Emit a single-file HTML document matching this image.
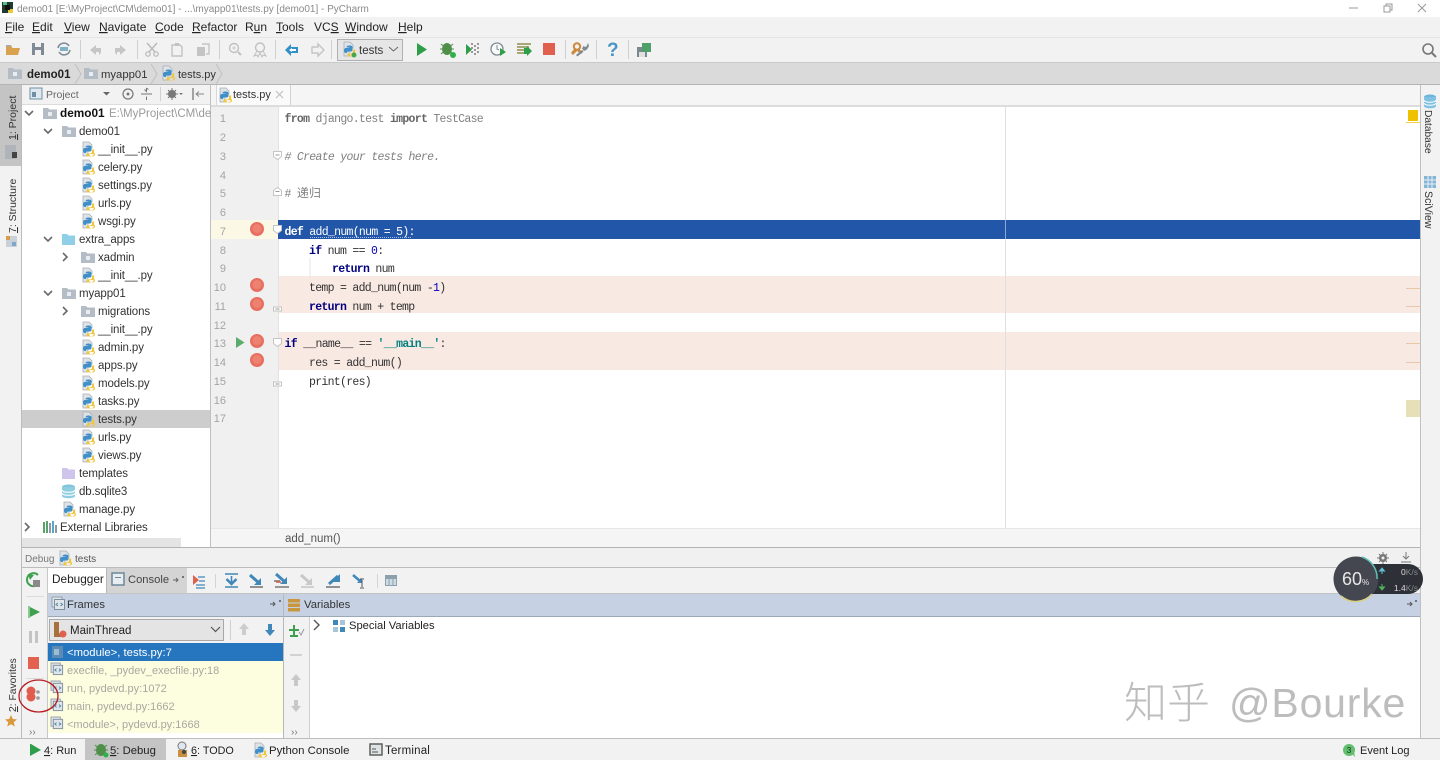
<!DOCTYPE html>
<html lang="en"><head><meta charset="utf-8"><title>PyCharm</title>
<style>
html,body{margin:0;padding:0;background:#fff;width:1440px;height:760px;overflow:hidden}
svg{display:block;position:absolute;left:0;top:0;filter:blur(.3px)}
text{font-family:"Liberation Sans","Noto Sans CJK SC",sans-serif;font-size:12px;fill:#2b2b2b}
.m{font-size:12px;fill:#222}
.t{font-size:11.500px;letter-spacing:-.1px;fill:#333}
.c{font-family:"Liberation Mono","Noto Sans CJK SC",monospace;font-size:11.500px;letter-spacing:-.7px;fill:#333}
.n{font-size:11px;fill:#a3a3a3;text-anchor:end}
.k{font-weight:bold;fill:#000080}
.g{fill:#808080}
.f{font-size:11px;fill:#a8a8a0}
.u{text-decoration:underline}
</style></head><body>
<svg width="1440" height="760" viewBox="0 0 1440 760" xmlns="http://www.w3.org/2000/svg">
<defs>
<symbol id="py" viewBox="0 0 16 16" overflow="visible">
<path d="M3 1h6l3 3v3H8v8H3z" fill="#dfe3e8" stroke="#a8afb8" stroke-width=".8"/>
<path d="M5.500 6.500c0-1.500 1-2 3-2s3 .5 3 2v2.500c0 1-.7 1.500-1.500 1.500h-3c-.8 0-1 .5-1 1.200V12H5c-1.300 0-2-1-2-2.500S3.700 7 5 7h3.500v-.5z" fill="#3f8fc8"/>
<path d="M13.500 8c1 .1 1.500 1 1.500 2.500S14.300 13 13 13H9.500v.8c0 1 1 1.700 2.500 1.700s3-.7 3-2V11c0-1.500-.5-2.700-1.500-3zM6.500 12.500h3c1.500 0 2.500-.8 2.500-2V8.500h2V12c0 2-1.500 3.500-3.500 3.500h-2c-1.200 0-2-.8-2-2z" fill="#f2c63c"/>
</symbol>
<symbol id="fo" viewBox="0 0 14 12" overflow="visible"><path d="M0 1h5l1.500 1.500H14V12H0z" fill="#b4bcc6"/><rect x="5" y="5" width="4" height="4" fill="#e9edf1"/></symbol>
<symbol id="fr" viewBox="0 0 14 14" overflow="visible"><rect x="0" y="0" width="10" height="10" fill="#dfe5ea" stroke="#93a0aa"/><rect x="2.500" y="2.500" width="10" height="10" fill="#dfe5ea" stroke="#7f8f9c"/><path d="M6 6l-2 1.500L6 9M8.500 6l2 1.500-2 1.500" stroke="#4d87a8" fill="none"/></symbol>
<symbol id="bp" viewBox="0 0 14 14"><circle cx="7" cy="7" r="7" fill="#e86f60"/><circle cx="7" cy="6.500" r="4.500" fill="#ed8273"/></symbol>
</defs>

<!-- base panels -->
<rect width="1440" height="760" fill="#f2f2f2"/>
<rect width="1440" height="17" fill="#fff"/>
<rect y="37" width="1440" height="1" fill="#e4e4e4"/>
<rect y="62" width="1440" height="1" fill="#c9c9c9"/>
<rect y="63" width="1440" height="21" fill="#dadada"/>
<rect y="84" width="1440" height="1" fill="#b4b4b4"/>

<!-- title -->
<rect x="2" y="2" width="11" height="11" fill="#1d3a30"/><rect x="3" y="2" width="4" height="3" fill="#4fc08d"/><rect x="8" y="9" width="5" height="4" fill="#e8c83c"/><rect x="5" y="5" width="5" height="5" fill="#111"/>
<text x="17" y="12" style="font-size:10px;fill:#8a8a8a">demo01 [E:\MyProject\CM\demo01] - ...\myapp01\tests.py [demo01] - PyCharm</text>
<path d="M1349 8h9" stroke="#999" stroke-width="1"/>
<path d="M1384 6h6v6h-6zM1386 6V4h6v6h-2" stroke="#999" fill="none"/>
<path d="M1418 4l8 8M1426 4l-8 8" stroke="#999" fill="none"/>

<!-- menu -->
<text class="m" x="5" y="31"><tspan class="u">F</tspan>ile</text>
<text class="m" x="32" y="31"><tspan class="u">E</tspan>dit</text>
<text class="m" x="64" y="31"><tspan class="u">V</tspan>iew</text>
<text class="m" x="99" y="31"><tspan class="u">N</tspan>avigate</text>
<text class="m" x="155" y="31"><tspan class="u">C</tspan>ode</text>
<text class="m" x="192" y="31"><tspan class="u">R</tspan>efactor</text>
<text class="m" x="245" y="31">R<tspan class="u">u</tspan>n</text>
<text class="m" x="276" y="31"><tspan class="u">T</tspan>ools</text>
<text class="m" x="314" y="31">VC<tspan class="u">S</tspan></text>
<text class="m" x="345" y="31"><tspan class="u">W</tspan>indow</text>
<text class="m" x="398" y="31"><tspan class="u">H</tspan>elp</text>

<!-- toolbar -->
<g fill="none">
<path d="M6 46h5l1.500 2H20l-2 7H6z" fill="#d9a24e"/><path d="M6 45h5l1 1.500H6z" fill="#a9a9a9"/>
<path d="M32 43h12v12H32z" fill="#7f8a95"/><rect x="35" y="43" width="6" height="4" fill="#f2f2f2"/><rect x="35" y="50" width="6" height="5" fill="#f2f2f2"/>
<path d="M58 48a6 6 0 0 1 11-2M70 50a6 6 0 0 1-11 2" stroke="#7b8a93" stroke-width="1.600"/><rect x="60" y="47" width="8" height="4" fill="#7fb1c9"/>
<path d="M90 50l6-5v3h5v5l-2 2v-3h-3v3z" fill="#c6c6c6"/>
<path d="M126 50l-6-5v3h-5v5l2 2v-3h3v3z" fill="#c6c6c6"/>
<path d="M147 43l8 9M157 43l-8 9" stroke="#b8b8b8" stroke-width="1.400"/><circle cx="148" cy="54" r="2.200" stroke="#b8b8b8" stroke-width="1.200"/><circle cx="156" cy="54" r="2.200" stroke="#b8b8b8" stroke-width="1.200"/>
<path d="M172 45h8l2 2v9h-10z" stroke="#c2c2c2" stroke-width="1.400"/><rect x="175" y="43" width="4" height="3" fill="#c2c2c2"/>
<rect x="197" y="47" width="8" height="9" fill="#c4c4c4"/><path d="M202 44h7v10h-3" stroke="#c4c4c4" stroke-width="1.400"/>
<circle cx="234" cy="48" r="4.500" stroke="#c0c0c0" stroke-width="1.400"/><path d="M238 52l3 3" stroke="#c0c0c0" stroke-width="2"/><circle cx="234" cy="48" r="1.500" fill="#d0d0d0"/>
<circle cx="260" cy="47.500" r="4.500" stroke="#c0c0c0" stroke-width="1.400"/><path d="M257 51l-3 5 3-1 1 2 2-4 2 4 1-2 3 1-3-5" stroke="#c0c0c0"/>
<path d="M285 50l6-6v3h7v6h-7v3z" fill="#2e8fc9"/><path d="M289 50l3-2v1h4v2h-4v1z" fill="#fff"/>
<path d="M324 50l-6-6v3h-6v6h6v3z" stroke="#c4c4c4" stroke-width="1.400"/>
</g>
<g fill="#d0d0d0"><rect x="80" y="40" width="1" height="19"/><rect x="137" y="40" width="1" height="19"/><rect x="219" y="40" width="1" height="19"/><rect x="275" y="40" width="1" height="19"/><rect x="565" y="40" width="1" height="19"/><rect x="596" y="40" width="1" height="19"/><rect x="628" y="40" width="1" height="19"/><rect x="331" y="40" width="1" height="19"/></g>
<rect x="337.500" y="39.500" width="65" height="21" fill="#e6e6e6" stroke="#b0b0b0"/>
<use href="#py" x="341" y="41" width="16" height="16"/>
<circle cx="354" cy="55" r="2.500" fill="#46a84a"/>
<text x="359" y="54" style="font-size:11.500px;fill:#333">tests</text>
<path d="M389 47l4.500 4 4.500-4" fill="none" stroke="#666"/>
<path d="M417 43l10 6.500-10 6.500z" fill="#2f9e4a"/>
<ellipse cx="447" cy="49" rx="5" ry="6" fill="#4f8f4a"/><path d="M441 44l12 10M453 44l-12 10M440 49h14" stroke="#4f8f4a"/><circle cx="453" cy="55" r="3" fill="#30b04a"/>
<path d="M466 44v11l6-5.500z" fill="#2f9e4a"/><g fill="#999"><rect x="471" y="43" width="2" height="2"/><rect x="474" y="45" width="2" height="2"/><rect x="477" y="43" width="2" height="2"/><rect x="471" y="47" width="2" height="2"/><rect x="474" y="49" width="2" height="2"/><rect x="477" y="47" width="2" height="2"/><rect x="477" y="51" width="2" height="2"/><rect x="471" y="51" width="2" height="2"/><rect x="474" y="53" width="2" height="2"/></g>
<circle cx="497" cy="49" r="6" fill="#fafafa" stroke="#7b8a93" stroke-width="1.300"/><path d="M497 45v4l2 1" stroke="#7b8a93" fill="none"/><path d="M500 48l6 4-6 4z" fill="#2f9e4a"/>
<path d="M517 44h14M517 47h12M517 50h8M517 53h8" stroke="#8c8f4f" stroke-width="1.500"/><path d="M524 48h3v-2l5 5-5 5v-2h-3z" fill="#2f9e4a"/>
<rect x="543" y="43" width="12" height="12" fill="#e05f4f"/>
<circle cx="577" cy="46.500" r="3.200" fill="none" stroke="#cc8a3c" stroke-width="2"/>
<path d="M579 49l4 3-2 2-4-3zM574 49l-3 4 2 2 4-4z" fill="#cc8a3c"/>
<path d="M588 43l-1.500 3.500-2 .5-.5-1.500-2 3 2 2.500 3-1.500 2-3.500z" fill="#7f8a90"/><path d="M582 50l-6 5 1.500 1.500 6-5z" fill="#7f8a90"/>
<text x="607" y="56" style="font-size:19px;font-weight:bold;fill:#4a94c8">?</text>
<rect x="637" y="47" width="10" height="10" fill="#7a8890"/><rect x="639" y="52" width="6" height="5" fill="#e0e0e0"/><rect x="642" y="43" width="9" height="9" fill="#4f9f6a"/>
<circle cx="1428" cy="49" r="5" fill="none" stroke="#777" stroke-width="1.600"/><path d="M1432 53l4 4" stroke="#777" stroke-width="2"/>

<!-- nav bar -->
<use href="#fo" x="8" y="67" width="14" height="12"/>
<text x="27" y="78" style="font-size:11.500px;font-weight:bold;fill:#222">demo01</text>
<path d="M75 64l6 10-6 10" fill="none" stroke="#c0c0c0"/>
<use href="#fo" x="84" y="67" width="14" height="12"/>
<text x="101" y="78" style="font-size:11.300px;fill:#333">myapp01</text>
<path d="M151 64l6 10-6 10" fill="none" stroke="#c0c0c0"/>
<use href="#py" x="160" y="65" width="16" height="16"/>
<text x="178" y="78" style="font-size:11px;fill:#333">tests.py</text>
<path d="M216 64l6 10-6 10" fill="none" stroke="#c0c0c0"/>

<!-- left strip -->
<rect x="0" y="85" width="21" height="81" fill="#c4c4c4"/>
<rect x="21" y="85" width="1" height="654" fill="#bcbcbc"/>
<text transform="translate(16 140) rotate(-90)" style="font-size:10.500px;fill:#333"><tspan class="u">1</tspan>: Project</text>
<rect x="5" y="145" width="11" height="14" fill="#aeb4ba"/><rect x="12" y="152" width="5" height="6" fill="#444"/>
<text transform="translate(16 233) rotate(-90)" style="font-size:10.500px;fill:#333"><tspan class="u">7</tspan>: Structure</text>
<rect x="6" y="236" width="11" height="11" fill="#c8d0d8"/><rect x="6" y="236" width="4" height="4" fill="#d89c4c"/><rect x="12" y="242" width="4" height="4" fill="#7fa6c8"/>
<text transform="translate(16 712) rotate(-90)" style="font-size:10.300px;fill:#333"><tspan class="u">2</tspan>: Favorites</text>
<path d="M11 715l1.800 4 4.200.4-3.200 2.800 1 4.300-3.800-2.300-3.800 2.300 1-4.300L5 719.400l4.200-.4z" fill="#d89a3c"/>

<!-- project header -->
<rect x="22" y="85" width="188" height="19" fill="#f2f2f2"/>
<rect x="22" y="104" width="188" height="1" fill="#dcdcdc"/>
<rect x="30" y="88" width="12" height="11" fill="#dfe8ee" stroke="#6f8fa6"/><rect x="32" y="92" width="4" height="5" fill="#6f8fa6"/>
<text x="46" y="98" style="font-size:10.500px;fill:#666">Project</text>
<path d="M103 92l3.500 3.500 3.500-3.500z" fill="#666"/>
<circle cx="128" cy="94" r="5" fill="none" stroke="#777" stroke-width="1.200"/><circle cx="128" cy="94" r="1.500" fill="#777"/>
<path d="M141 94h11M146.500 88v3.500l-2-2M146.500 88l2 1.500M146.500 100v-3.500" stroke="#777" fill="none"/>
<rect x="160" y="87" width="1" height="14" fill="#d0d0d0"/>
<circle cx="172" cy="94" r="4" fill="#777"/><circle cx="172" cy="94" r="1.500" fill="#f2f2f2"/><path d="M172 88v12M166 94h12M168 90l8 8M176 90l-8 8" stroke="#777"/><path d="M179 93l2 2 2-2z" fill="#777"/>
<path d="M193 88v12" stroke="#777" stroke-width="1.300"/><path d="M197 94h7M199 91.500L196 94l3 2.500" stroke="#888" fill="none"/>

<!-- tree -->
<rect x="22" y="105" width="188" height="442" fill="#fff"/>
<rect x="22" y="410" width="188" height="18" fill="#cdcdcd"/>
<rect x="22" y="538" width="159" height="9" fill="#e4e4e4"/>
<rect x="210" y="85" width="1" height="463" fill="#c0c0c0"/>
<g fill="none" stroke="#6a6a6a" stroke-width="1.600">
<path d="M25 111l4 4 4-4M44 129l4 4 4-4M44 237l4 4 4-4M44 291l4 4 4-4"/>
<path d="M63 253l4 4-4 4M63 307l4 4-4 4M25 523l4 4-4 4"/>
</g>
<use href="#fo" x="43" y="107" width="14" height="12"/>
<text x="60" y="117" style="font-size:11.800px;font-weight:bold;fill:#111">demo01</text>
<text x="109" y="117" style="font-size:11.500px;fill:#9a9a9a">E:\MyProject\CM\de</text>
<use href="#fo" x="62" y="125" width="14" height="12"/><text class="t" x="79" y="135">demo01</text>
<use href="#py" x="80" y="141" width="16" height="16"/><text class="t" x="98" y="153">__init__.py</text>
<use href="#py" x="80" y="159" width="16" height="16"/><text class="t" x="98" y="171">celery.py</text>
<use href="#py" x="80" y="177" width="16" height="16"/><text class="t" x="98" y="189">settings.py</text>
<use href="#py" x="80" y="195" width="16" height="16"/><text class="t" x="98" y="207">urls.py</text>
<use href="#py" x="80" y="213" width="16" height="16"/><text class="t" x="98" y="225">wsgi.py</text>
<path d="M62 234h5l1.500 1.500H75V245H62z" fill="#8fd0e8"/><text class="t" x="79" y="243">extra_apps</text>
<use href="#fo" x="81" y="251" width="14" height="12"/><text class="t" x="98" y="261">xadmin</text>
<use href="#py" x="80" y="267" width="16" height="16"/><text class="t" x="98" y="279">__init__.py</text>
<use href="#fo" x="62" y="287" width="14" height="12"/><text class="t" x="79" y="297">myapp01</text>
<use href="#fo" x="81" y="305" width="14" height="12"/><text class="t" x="98" y="315">migrations</text>
<use href="#py" x="80" y="321" width="16" height="16"/><text class="t" x="98" y="333">__init__.py</text>
<use href="#py" x="80" y="339" width="16" height="16"/><text class="t" x="98" y="351">admin.py</text>
<use href="#py" x="80" y="357" width="16" height="16"/><text class="t" x="98" y="369">apps.py</text>
<use href="#py" x="80" y="375" width="16" height="16"/><text class="t" x="98" y="387">models.py</text>
<use href="#py" x="80" y="393" width="16" height="16"/><text class="t" x="98" y="405">tasks.py</text>
<use href="#py" x="80" y="411" width="16" height="16"/><text class="t" x="98" y="423">tests.py</text>
<use href="#py" x="80" y="429" width="16" height="16"/><text class="t" x="98" y="441">urls.py</text>
<use href="#py" x="80" y="447" width="16" height="16"/><text class="t" x="98" y="459">views.py</text>
<path d="M62 468h5l1.500 1.500H75V479H62z" fill="#cfc4ec"/><text class="t" x="79" y="477">templates</text>
<ellipse cx="68.500" cy="487" rx="6.500" ry="2.500" fill="#7fc4dc"/><path d="M62 487v9c0 3 13 3 13 0v-9" fill="#8fcde0"/><path d="M62 490c0 3 13 3 13 0M62 493c0 3 13 3 13 0" stroke="#fff" fill="none"/><text class="t" x="79" y="495">db.sqlite3</text>
<use href="#py" x="61" y="501" width="16" height="16"/><text class="t" x="79" y="513">manage.py</text>
<g fill="#5ba36a"><rect x="43" y="522" width="2" height="11"/><rect x="46" y="521" width="2" height="12"/></g><rect x="49" y="523" width="2" height="10" fill="#8a9aa6"/><rect x="52" y="521" width="2" height="12" fill="#5aa6c8"/><rect x="55" y="525" width="2" height="8" fill="#8a9aa6"/>
<text class="t" x="60" y="531">External Libraries</text>

<!-- editor tabs -->
<rect x="211" y="85" width="1209" height="20" fill="#f5f5f5"/>
<rect x="216" y="85" width="1" height="20" fill="#d8d8d8"/><rect x="217" y="85" width="73" height="20" fill="#fafafa"/><rect x="290" y="85" width="1" height="20" fill="#d0d0d0"/>
<use href="#py" x="217" y="87" width="16" height="16"/>
<text x="233" y="98" style="font-size:11px;fill:#333">tests.py</text>
<path d="M276 91l7 7M283 91l-7 7" stroke="#bdbdbd"/>
<rect x="211" y="105" width="1209" height="2" fill="#dcdcdc"/>

<!-- editor -->
<rect x="211" y="107" width="1209" height="422" fill="#fff"/>
<rect x="211" y="107" width="67" height="422" fill="#f0f0f0"/>
<rect x="278" y="107" width="1" height="422" fill="#e2e2e2"/>
<rect x="211" y="220" width="67" height="19" fill="#fcf8e6"/>
<rect x="278" y="220" width="1142" height="19" fill="#2156a8"/>
<rect x="279" y="276" width="1141" height="37" fill="#f9e9e3"/>
<rect x="279" y="332" width="1141" height="38" fill="#f9e9e3"/>
<rect x="1005" y="107" width="1" height="422" fill="#dfdfdf"/>
<rect x="1005" y="220" width="1" height="19" fill="#8ea8d0"/>
<g><text class="n" x="226" y="122">1</text><text class="n" x="226" y="141">2</text><text class="n" x="226" y="160">3</text><text class="n" x="226" y="179">4</text><text class="n" x="226" y="197">5</text><text class="n" x="226" y="216">6</text><text class="n" x="226" y="235">7</text><text class="n" x="226" y="254">8</text><text class="n" x="226" y="272">9</text><text class="n" x="226" y="291">10</text><text class="n" x="226" y="310">11</text><text class="n" x="226" y="329">12</text><text class="n" x="226" y="347">13</text><text class="n" x="226" y="366">14</text><text class="n" x="226" y="385">15</text><text class="n" x="226" y="404">16</text><text class="n" x="226" y="422">17</text></g>
<use href="#bp" x="250" y="222" width="14" height="14"/><use href="#bp" x="250" y="278" width="14" height="14"/><use href="#bp" x="250" y="297" width="14" height="14"/><use href="#bp" x="250" y="334" width="14" height="14"/><use href="#bp" x="250" y="353" width="14" height="14"/>
<path d="M236 337l8.500 5.500-8.500 5.500z" fill="#5cab6e"/>
<g fill="#fff" stroke="#c4c4c4"><path d="M273.500 151.500h8v5l-4 3-4-3zM273.500 195.500v-5l4-3 4 3v5zM273.500 225.500h8v5l-4 3-4-3zM273.500 307v4h8v-4zM273.500 338.500h8v5l-4 3-4-3zM273.500 382v4h8v-4z"/></g>
<path d="M275.500 155h4M275.500 191.500h4M275.500 309h4M275.500 384h4" stroke="#999"/>
<path d="M310 258v20" stroke="#e4e4e4"/>
<text class="c" x="284.500" y="122" style="fill:#666"><tspan style="font-weight:bold">from</tspan> <tspan class="g">django.test</tspan> <tspan style="font-weight:bold">import</tspan> <tspan class="g">TestCase</tspan></text>
<text class="c" x="284.500" y="160" style="font-style:italic;fill:#808080"># Create your tests here.</text>
<text class="c" x="284.500" y="197" style="fill:#808080"># <tspan style="font-size:12px;letter-spacing:0">递归</tspan></text>
<text class="c" x="284.500" y="235" style="fill:#fff"><tspan style="font-weight:bold">def</tspan> add_num(num = 5):</text>
<path d="M310 237.500h102" stroke="#a9bede" stroke-dasharray="1 1"/>
<text class="c" x="309" y="254"><tspan class="k">if</tspan> num == <tspan style="fill:#0000c0">0</tspan>:</text>
<text class="c" x="332" y="272"><tspan class="k">return</tspan> num</text>
<text class="c" x="309" y="291">temp = add_num(num -<tspan style="fill:#0000c0">1</tspan>)</text>
<text class="c" x="309" y="310"><tspan class="k">return</tspan> num + temp</text>
<text class="c" x="284.500" y="347"><tspan class="k">if</tspan> __name__ == <tspan style="fill:#008080;font-weight:bold">'__main__'</tspan>:</text>
<text class="c" x="309" y="366">res = add_num()</text>
<text class="c" x="309" y="385">print(res)</text>
<rect x="1408" y="110" width="10" height="11" fill="#eec200"/><rect x="1406" y="122" width="14" height="1" fill="#eed050"/>
<rect x="1406" y="400" width="14" height="17" fill="#e6dfb8"/>
<g fill="#e8c8a8"><rect x="1406" y="288" width="14" height="1"/><rect x="1406" y="306" width="14" height="1"/><rect x="1406" y="343" width="14" height="1"/><rect x="1406" y="362" width="14" height="1"/></g>
<rect x="1420" y="85" width="1" height="654" fill="#c0c0c0"/>

<!-- breadcrumb -->
<rect x="211" y="529" width="1209" height="18" fill="#f5f5f5"/>
<rect x="211" y="528" width="1209" height="1" fill="#e6e6e6"/>
<text x="285" y="542" style="font-size:11.500px;fill:#555">add_num()</text>

<!-- right strip -->
<ellipse cx="1430" cy="97" rx="6" ry="2.500" fill="#6cb4dc"/><path d="M1424 97v9c0 3 12 3 12 0v-9" fill="#80c0e2"/><path d="M1424 100c0 3 12 3 12 0M1424 103c0 3 12 3 12 0" stroke="#fff" fill="none"/>
<text transform="translate(1425 110) rotate(90)" style="font-size:10.200px;fill:#333">Database</text>
<rect x="1424" y="176" width="12" height="12" fill="#86b4d4"/><path d="M1428 176v12M1432 176v12M1424 180h12M1424 184h12" stroke="#e8f0f6"/>
<text transform="translate(1425 191) rotate(90)" style="font-size:10.600px;fill:#333">SciView</text>

<!-- debug header -->
<rect x="22" y="547" width="1398" height="1" fill="#b4b4b4"/>
<rect x="22" y="548" width="1398" height="19" fill="#f0f0f0"/>
<rect x="22" y="567" width="1398" height="1" fill="#bcbcbc"/>
<text x="25" y="562" style="font-size:10px;fill:#777">Debug</text>
<use href="#py" x="57" y="550" width="16" height="16"/>
<text x="75" y="562" style="font-size:10px;fill:#555">tests</text>
<circle cx="1383" cy="558" r="4" fill="#777"/><path d="M1383 552v12M1377 558h12M1379 554l8 8M1387 554l-8 8" stroke="#777"/><circle cx="1383" cy="558" r="1.500" fill="#f0f0f0"/>
<path d="M1406 552v6M1403 556l3 3 3-3M1401 562h10" stroke="#777" fill="none"/>

<!-- debug left tools -->
<rect x="22" y="568" width="25" height="171" fill="#f2f2f2"/>
<rect x="47" y="568" width="1" height="171" fill="#c8c8c8"/>
<path d="M38 575a6.500 6.500 0 1 0-3 11" fill="none" stroke="#3fa050" stroke-width="2"/><path d="M28 574l2 6 4-5z" fill="#3fa050"/><rect x="33" y="580" width="7" height="7" fill="#8a8a8a"/>
<rect x="26" y="596" width="18" height="1" fill="#dcdcdc"/>
<path d="M28 606l12 6-12 6z" fill="#3fa050"/><path d="M28 606h2v12h-2z" fill="#8ac890"/>
<rect x="29" y="631" width="3" height="12" fill="#c4c4c4"/><rect x="35" y="631" width="3" height="12" fill="#c4c4c4"/>
<rect x="28" y="657" width="11" height="12" fill="#e2614f"/>
<rect x="26" y="678" width="18" height="1" fill="#dcdcdc"/>
<circle cx="31" cy="691" r="4.500" fill="#e05c4c"/><circle cx="31" cy="697" r="4.500" fill="#e05c4c"/><circle cx="38" cy="692" r="1.800" fill="#9a9a9a"/><circle cx="38" cy="698" r="1.800" fill="#9a9a9a"/>
<text x="29" y="735" style="font-size:10px;fill:#777">››</text>

<!-- debug tabs -->
<rect x="48" y="568" width="58" height="25" fill="#fff"/>
<rect x="106" y="568" width="81" height="25" fill="#d4d4d4"/>
<rect x="106" y="568" width="1" height="25" fill="#b8b8b8"/>
<rect x="187" y="568" width="1233" height="25" fill="#f2f2f2"/>
<text x="52" y="583" style="font-size:11.800px;fill:#222">Debugger</text>
<rect x="112" y="573" width="12" height="12" fill="#e8edf1" stroke="#6d8899" stroke-width="1.500"/><rect x="115" y="577" width="6" height="1" fill="#6d8899"/>
<text x="128" y="583" style="font-size:11.200px;fill:#444">Console</text>
<path d="M173 580h5M176 578l2 2-2 2" fill="none" stroke="#666"/><circle cx="183" cy="577" r="1" fill="#555"/>
<path d="M193 575l6 5-6 5z" fill="#e0604f"/><path d="M198 577h7M199 581h6M196 585h9M196 588h9" stroke="#3f88b8" stroke-width="1.200"/>
<rect x="215" y="574" width="1" height="14" fill="#d4d4d4"/>
<g stroke-width="1.600" fill="none"><path d="M225 574h13M225 587h13M231.500 576v8" stroke="#3f88b8"/><path d="M226.500 579l5 5 5-5" stroke="#3f88b8" stroke-width="2.500"/>
<path d="M250 575l9 8" stroke="#3f88b8" stroke-width="3"/><path d="M261 578v7h-7z" fill="#3f88b8"/><path d="M250 587h13" stroke="#777"/>
<path d="M276 574l9 8" stroke="#3f88b8" stroke-width="3"/><path d="M287 577v7h-7z" fill="#3f88b8"/><path d="M275 587h14M274 581h6" stroke="#777"/><path d="M276 582h5" stroke="#d8604f"/>
<path d="M301 575l9 8" stroke="#c8c8c8" stroke-width="3"/><path d="M312 578v7h-7z" fill="#c8c8c8"/><path d="M301 587h13" stroke="#c8c8c8"/>
<path d="M329 584l9-8" stroke="#3f88b8" stroke-width="3"/><path d="M340 574v8h-8z" fill="#3f88b8"/><path d="M326 587h14" stroke="#777"/>
<path d="M353 575l7 6" stroke="#3f88b8" stroke-width="2.500"/><path d="M362 578v5h-5z" fill="#3f88b8"/><path d="M362 580v7M360 579h4M360 588h4" stroke="#555" stroke-width="1"/></g>
<rect x="377" y="574" width="1" height="14" fill="#d4d4d4"/>
<rect x="385" y="575" width="12" height="11" fill="#8ca0ae"/><rect x="386" y="579" width="10" height="6" fill="#d0dce4"/><path d="M389 579v6M393 579v6" stroke="#8ca0ae"/>
<rect x="48" y="593" width="1372" height="1" fill="#c4c4c4"/>

<!-- frames & variables headers -->
<rect x="48" y="594" width="1372" height="22" fill="#c6d2e4"/>
<rect x="48" y="616" width="1372" height="1" fill="#9aa8b8"/>
<rect x="283" y="594" width="1" height="145" fill="#b8b8b8"/>
<use href="#fr" x="52" y="597" width="14" height="14"/>
<text x="67" y="608" style="font-size:11.200px;fill:#333">Frames</text>
<path d="M270 604h5M273 602l2 2-2 2" fill="none" stroke="#555"/><circle cx="280" cy="601" r="1" fill="#555"/>
<rect x="288" y="599" width="12" height="3.500" fill="#c8963c"/><rect x="288" y="603.500" width="12" height="3.500" fill="#c8963c"/><rect x="288" y="608" width="12" height="3.500" fill="#c8963c"/>
<text x="304" y="608" style="font-size:11.300px;fill:#333">Variables</text>
<path d="M1407 604h5M1410 602l2 2-2 2" fill="none" stroke="#555"/><circle cx="1416" cy="601" r="1" fill="#555"/>

<!-- frames -->
<rect x="48" y="617" width="235" height="26" fill="#f2f2f2"/>
<rect x="49.500" y="619.500" width="174" height="21" fill="#e4e4e4" stroke="#a8a8a8"/>
<path d="M54 622h5v11l4 2v2h-9z" fill="#a8703c"/><circle cx="63" cy="634" r="3.500" fill="#e0604f"/>
<text x="70" y="634" style="font-size:11.500px;fill:#222">MainThread</text>
<path d="M211 627l4.500 4.500 4.500-4.500" fill="none" stroke="#555" stroke-width="1.200"/>
<rect x="230" y="620" width="1" height="20" fill="#d0d0d0"/>
<path d="M244 623l5 6h-3v6h-4v-6h-3z" fill="#cdcdcd"/>
<path d="M270 636l5-6h-3v-6h-4v6h-3z" fill="#3f88b8"/>
<rect x="48" y="643" width="235" height="18" fill="#2675bf"/>
<rect x="48" y="661" width="235" height="72" fill="#fdfde0"/>
<rect x="48" y="733" width="235" height="6" fill="#fff"/>
<rect x="52" y="646" width="11" height="12" fill="#5c8cb4"/><rect x="54" y="649" width="5" height="6" fill="#9cbcd4"/>
<text x="67" y="656" style="font-size:11.300px;fill:#fff">&lt;module&gt;, tests.py:7</text>
<use href="#fr" x="51" y="663" width="13" height="13"/><text class="f" x="67" y="674">execfile, _pydev_execfile.py:18</text>
<use href="#fr" x="51" y="681" width="13" height="13"/><text class="f" x="67" y="692">run, pydevd.py:1072</text>
<use href="#fr" x="51" y="699" width="13" height="13"/><text class="f" x="67" y="710">main, pydevd.py:1662</text>
<use href="#fr" x="51" y="717" width="13" height="13"/><text class="f" x="67" y="728">&lt;module&gt;, pydevd.py:1668</text>

<!-- red annotation ellipse -->
<ellipse cx="38.500" cy="696" rx="19.500" ry="16" fill="none" stroke="#b81a20" stroke-width="1.300"/>

<!-- variables -->
<rect x="284" y="617" width="25" height="122" fill="#f2f2f2"/>
<rect x="309" y="617" width="1" height="122" fill="#d0d0d0"/>
<rect x="310" y="617" width="1110" height="122" fill="#fff"/>
<path d="M289 630h10M294 625v10M290 636h8" stroke="#3f9f50" stroke-width="2" fill="none"/><path d="M299 632l2 3 3-6" stroke="#999" fill="none"/>
<path d="M290 655h12" stroke="#c8c8c8" stroke-width="1.500"/>
<path d="M296 674l5 6h-3v6h-4v-6h-3z" fill="#c8c8c8"/>
<path d="M296 712l5-6h-3v-6h-4v6h-3z" fill="#c8c8c8"/>
<text x="291" y="735" style="font-size:10px;fill:#777">››</text>
<path d="M314 620l5 5-5 5" fill="none" stroke="#555" stroke-width="1.400"/>
<rect x="333" y="620" width="5" height="5" fill="#3f88b8"/><rect x="340" y="620" width="5" height="5" fill="#a8c4d8"/><rect x="333" y="627" width="5" height="5" fill="#a8c4d8"/><rect x="340" y="627" width="5" height="5" fill="#3f88b8"/>
<text x="349" y="629" style="font-size:11.200px;fill:#222">Special Variables</text>

<!-- watermark -->
<text x="1124" y="718" style="font-size:43px;fill:#bdbdbd;font-family:'Noto Sans CJK SC','Liberation Sans',sans-serif;font-weight:300">知乎</text>
<text x="1229" y="717" style="font-size:41px;fill:#bdbdbd;letter-spacing:.8px">@Bourke</text>

<!-- gauge -->
<rect x="1350" y="564" width="73" height="30" rx="15" fill="#2e3038"/>
<circle cx="1356" cy="579" r="22.500" fill="#44474f"/>
<path d="M1362 557a22 22 0 0 1 15 22" fill="none" stroke="#5cc0b4" stroke-width="1.500"/>
<path d="M1341 596a22 22 0 0 0 31-2" fill="none" stroke="#d8d080" stroke-width="1.500"/>
<text x="1342" y="585" style="font-size:18px;fill:#e8e8e8">60<tspan style="font-size:8px">%</tspan></text>
<path d="M1382 568l2.500 3h-5zM1382 568v6" stroke="#5cc0d0" fill="#5cc0d0"/>
<text x="1418" y="575" style="font-size:8.500px;fill:#ddd;text-anchor:end">0<tspan style="fill:#888">K/s</tspan></text>
<path d="M1382 590l2.500-3h-5zM1382 590v-6" stroke="#50b060" fill="#50b060"/>
<text x="1418" y="591" style="font-size:8.500px;fill:#ddd;text-anchor:end">1.4<tspan style="fill:#888">K/s</tspan></text>

<!-- status bar -->
<rect y="739" width="1440" height="21" fill="#f2f2f2"/>
<rect y="738" width="1440" height="1" fill="#bdbdbd"/>
<rect x="85" y="739" width="81" height="21" fill="#c4c4c4"/>
<path d="M30 744h1l10 6-11 6z" fill="#2f9e4a"/>
<text x="44" y="754" style="font-size:11px;fill:#222"><tspan class="u">4</tspan>: Run</text>
<ellipse cx="101" cy="750" rx="5" ry="6" fill="#4f8f4a"/><path d="M95 745l12 10M107 745l-12 10M94 750h14" stroke="#4f8f4a"/><circle cx="106" cy="755" r="2.500" fill="#30b04a"/>
<text x="110" y="754" style="font-size:11.300px;fill:#222"><tspan class="u">5</tspan>: Debug</text>
<circle cx="182" cy="746" r="4" fill="#dfe8ee" stroke="#777"/><rect x="178" y="750" width="9" height="7" fill="#c89040"/><circle cx="184" cy="752" r="2" fill="#444"/>
<text x="191" y="754" style="font-size:10.800px;fill:#222"><tspan class="u">6</tspan>: TODO</text>
<use href="#py" x="252" y="742" width="16" height="16"/>
<text x="269" y="754" style="font-size:11.400px;fill:#222">Python Console</text>
<rect x="370" y="744" width="12" height="11" fill="#dfe3e6" stroke="#555" stroke-width="1.400"/><path d="M372 749h4M372 752h6" stroke="#555"/>
<text x="385" y="754" style="font-size:11.500px;letter-spacing:.2px;fill:#222">Terminal</text>
<circle cx="1349" cy="750" r="6" fill="#62bf6e"/><path d="M1352 754l3 3-1-5z" fill="#62bf6e"/>
<text x="1349" y="753" style="font-size:8.500px;fill:#17371c;text-anchor:middle">3</text>
<text x="1360" y="754" style="font-size:11px;fill:#222">Event Log</text>
</svg>
</body></html>
